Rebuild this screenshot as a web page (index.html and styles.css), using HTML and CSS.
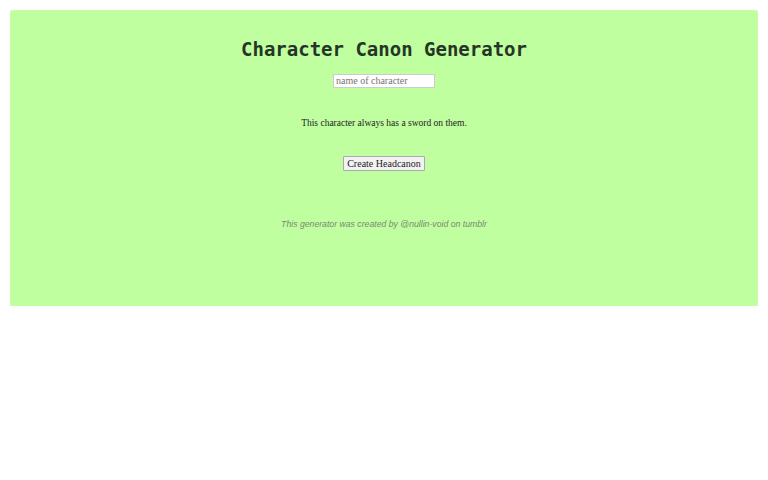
FILE: index.html
```html
<!DOCTYPE html>
<html lang="en">
<head>
    <meta charset="UTF-8">
    <title>Character Canon Generator</title>
    <link rel="stylesheet" href="styles.css">
</head>
<body>
<div class="container">
    <h1>Character Canon Generator</h1>
    <input id="charName" type="text" placeholder="name of character">

    <p id="result" class="result">This character always has a sword on them.</p>

    <button onclick="makeCanon()">Create Headcanon</button>

    <p class="credit">This generator was created by @nullin-void on tumblr</p>
</div>
</body>
</html>
```

FILE: styles.css
```css
body {
    margin: 10px;
    background: #fff;
    font-family: "Liberation Serif", serif;
}

.container {
    background-color: #bfffa0;
    height: 296px;
    border-radius: 3px;
    box-shadow: 0 1px 2px rgba(0, 0, 0, 0.12);
    text-align: center;
    padding-top: 28px;
    box-sizing: border-box;
}

h1 {
    font-family: "DejaVu Sans Mono", monospace;
    font-size: 19px;
    color: #263526;
    margin: 0 0 10px;
}

input {
    width: 102px;
    height: 14px;
    box-sizing: border-box;
    padding: 0 2px;
    border: 1px solid #ccc;
    font-family: "Liberation Serif", serif;
    font-size: 10px;
}

.result {
    font-size: 9.5px;
    color: #222;
    margin: 30px 0 25px;
}

button {
    font-family: "Liberation Serif", serif;
    font-size: 10px;
    color: #222;
    padding: 1px 3px;
    background: #f2f2f2;
    border: 1px solid #aaa;
    border-radius: 1px;
}

.credit {
    font-family: "Liberation Sans", sans-serif;
    font-style: italic;
    font-size: 8.7px;
    color: #7a8a72;
    margin-top: 48px;
}
```
